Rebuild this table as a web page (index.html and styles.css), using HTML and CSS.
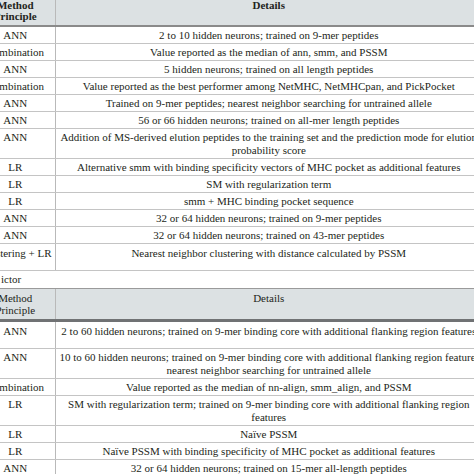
FILE: index.html
```html
<!DOCTYPE html>
<html>
<head>
<meta charset="utf-8">
<link rel="stylesheet" href="styles.css">
</head>
<body>
<div class="crop">
  <div class="sheet">
    <table class="tbl">
      <colgroup><col class="c1"><col class="c2"></colgroup>
      <thead>
        <tr class="head bold"><th>Method<br>Principle</th><th>Details</th></tr>
      </thead>
      <tbody>
        <tr><td>ANN</td><td>2 to 10 hidden neurons; trained on 9-mer peptides</td></tr>
        <tr><td>Combination</td><td>Value reported as the median of ann, smm, and PSSM</td></tr>
        <tr><td>ANN</td><td>5 hidden neurons; trained on all length peptides</td></tr>
        <tr><td>Combination</td><td>Value reported as the best performer among NetMHC, NetMHCpan, and PickPocket</td></tr>
        <tr><td>ANN</td><td>Trained on 9-mer peptides; nearest neighbor searching for untrained allele</td></tr>
        <tr><td>ANN</td><td>56 or 66 hidden neurons; trained on all-mer length peptides</td></tr>
        <tr><td>ANN</td><td>Addition of MS-derived elution peptides to the training set and the prediction mode for elution<br>probability score</td></tr>
        <tr><td>LR</td><td>Alternative smm with binding specificity vectors of MHC pocket as additional features</td></tr>
        <tr><td>LR</td><td>SM with regularization term</td></tr>
        <tr><td>LR</td><td>smm + MHC binding pocket sequence</td></tr>
        <tr><td>ANN</td><td>32 or 64 hidden neurons; trained on 9-mer peptides</td></tr>
        <tr><td>ANN</td><td>32 or 64 hidden neurons; trained on 43-mer peptides</td></tr>
        <tr class="tall"><td>Clustering + LR</td><td>Nearest neighbor clustering with distance calculated by PSSM</td></tr>
      </tbody>
    </table>
    <div class="caption">ictor</div>
    <table class="tbl second">
      <colgroup><col class="c1"><col class="c2"></colgroup>
      <thead>
        <tr class="head"><th>Method<br>Principle</th><th>Details</th></tr>
      </thead>
      <tbody>
        <tr class="tall"><td>ANN</td><td>2 to 60 hidden neurons; trained on 9-mer binding core with additional flanking region features</td></tr>
        <tr><td>ANN</td><td>10 to 60 hidden neurons; trained on 9-mer binding core with additional flanking region features<br>nearest neighbor searching for untrained allele</td></tr>
        <tr><td>Combination</td><td>Value reported as the median of nn-align, smm_align, and PSSM</td></tr>
        <tr><td>LR</td><td>SM with regularization term; trained on 9-mer binding core with additional flanking region<br>features</td></tr>
        <tr><td>LR</td><td>Naïve PSSM</td></tr>
        <tr><td>LR</td><td>Naïve PSSM with binding specificity of MHC pocket as additional features</td></tr>
        <tr><td>ANN</td><td>32 or 64 hidden neurons; trained on 15-mer all-length peptides</td></tr>
      </tbody>
    </table>
  </div>
</div>
</body>
</html>
```
FILE: styles.css
```css
html, body {
  margin: 0;
  padding: 0;
  background: #ffffff;
}
.crop {
  width: 474px;
  height: 474px;
  overflow: hidden;
}
.sheet {
  width: 506px;
  margin-left: -24px;
  display: flex;
  flex-direction: column;
  font-family: "Liberation Serif", "Times New Roman", serif;
  font-size: 11px;
  color: #231f20;
}
.tbl {
  width: 506px;
  table-layout: fixed;
  border-collapse: collapse;
}
.c1 { width: 79px; }
.c2 { width: 427px; }
.tbl th, .tbl td {
  padding: 2px 4px 1px;
  line-height: 13px;
  text-align: center;
  vertical-align: top;
  white-space: nowrap;
  overflow: hidden;
  border-bottom: 1px solid #c4c4c4;
  font-weight: normal;
}
.tbl td:first-child, .tbl th:first-child {
  border-right: 1px solid #b9b9b9;
}
.head th {
  background: #dce1e3;
  line-height: 11px;
  padding: 0 4px 3px;
  border-bottom: 2px solid #8a8a8a;
}
.head th:last-child {
  vertical-align: top;
  padding-top: 0;
}
.head.bold th {
  font-weight: bold;
}
.tall td {
  height: 22px;
  padding-top: 3px;
}
.caption {
  height: 17px;
  line-height: 17px;
  padding-left: 25px;
  border-bottom: 1px solid #9a9a9a;
}
.second .head th {
  line-height: 12px;
  padding: 3px 4px 3px;
  border-bottom: 3px solid #707274;
}
.second .head th:last-child {
  padding-top: 3px;
}
```
